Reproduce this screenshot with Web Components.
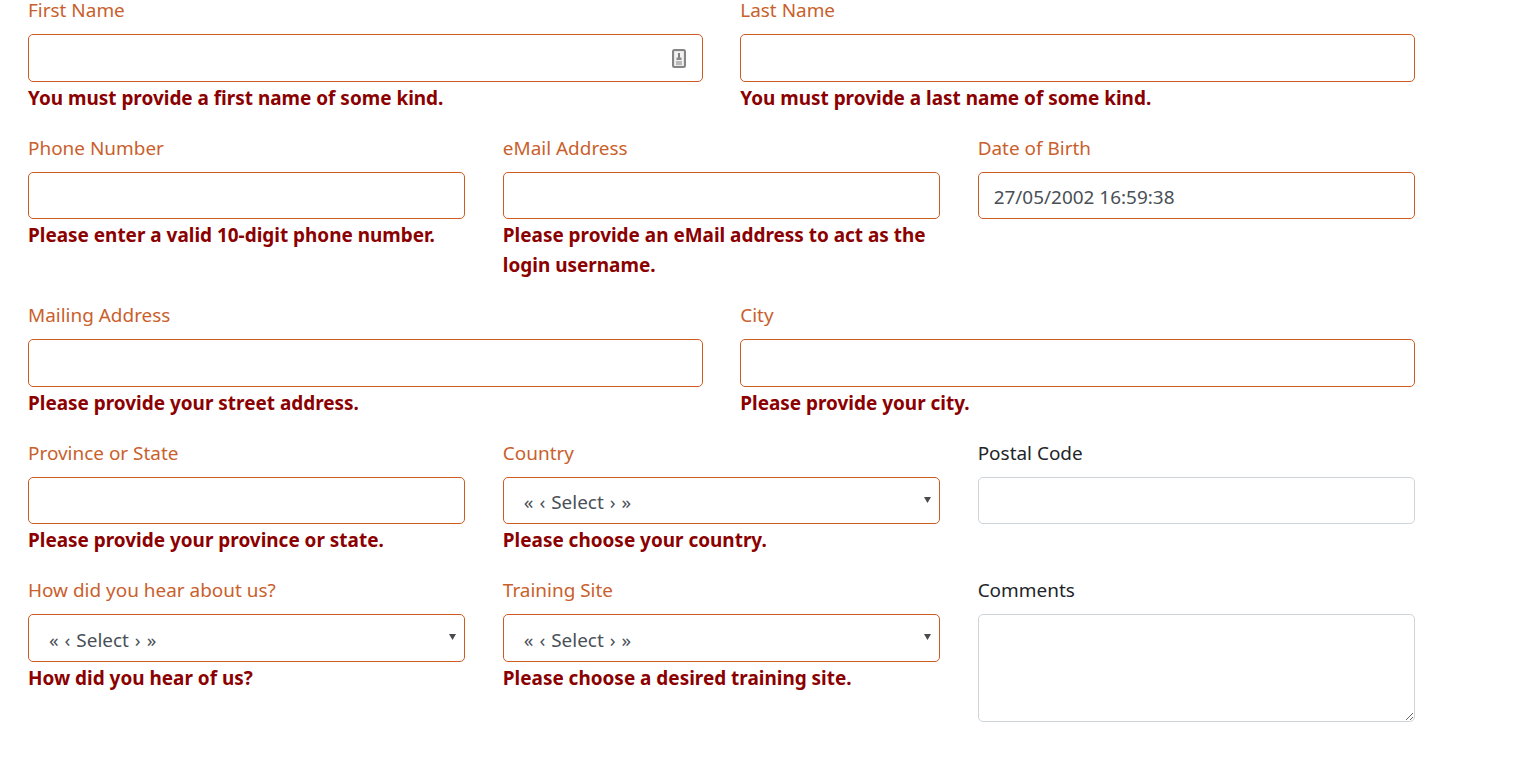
<!DOCTYPE html>
<html lang="en"><head><meta charset="utf-8"><title>Form</title>
<style>
html,body{margin:0;padding:0;background:#fff}
body{font:20px/30px "Noto Sans","Open Sans",sans-serif;color:#212529;overflow:hidden;height:771px}
</style></head><body>
<signup-form></signup-form>
<script>
const FONT='"Noto Sans","Open Sans","Liberation Sans",sans-serif';
class FormRow extends HTMLElement{
  constructor(){super();this.attachShadow({mode:'open'}).innerHTML=`<style>
  :host{display:grid;grid-template-columns:repeat(12,1fr);column-gap:37.5px}
  ::slotted([span="6"]){grid-column:span 6}
  ::slotted([span="4"]){grid-column:span 4}
  </style><slot></slot>`;}
}
customElements.define('form-row',FormRow);
class FormField extends HTMLElement{
  constructor(){super();
    const type=this.getAttribute('type')||'text';
    const label=this.getAttribute('label')||'';
    const err=this.getAttribute('error');
    const val=this.getAttribute('value')||'';
    const invalid=err!==null||this.hasAttribute('invalid');
    let ctl;
    if(type==='select') ctl=`<select><option>« ‹ Select › »</option></select><svg class="caret" width="7" height="6" viewBox="0 0 7 6"><path d="M0 0H7L3.5 6Z" fill="#4a4a4f"/></svg>`;
    else if(type==='area') ctl=`<textarea></textarea>`;
    else ctl=`<input type="text" value="${val}">`;
    if(this.hasAttribute('icon')) ctl+=`<svg class="ico" width="14" height="19" viewBox="0 0 14 19"><rect x="1" y="1" width="12" height="17" rx="1.5" fill="#e6e6e6" stroke="#858585" stroke-width="2"/><rect x="3" y="3" width="8" height="13" fill="#f2f2f2"/><path d="M7 4v5" stroke="#808080" stroke-width="2"/><path d="M4.5 8.5h5v2.5h-5z" fill="#8a8a8a"/><path d="M4 13h6M4 15h6" stroke="#a8a8a8" stroke-width="1.3"/></svg>`;
    this.attachShadow({mode:'open'}).innerHTML=`<style>
    :host{display:block;font-family:${FONT};font-size:18.95px;line-height:30px;margin-bottom:19px;min-width:0}
    label{display:block;padding-top:1px;margin-bottom:9px;color:${invalid?'#c9602c':'#212529'}}
    .wrap{position:relative;display:block}
    input,select,textarea{display:block;box-sizing:border-box;width:100%;height:47.5px;margin:0;border:1px solid ${invalid?'#cc5c22':'#ced4da'};border-radius:5px;background:#fff;color:#495057;font:inherit;padding:3px 15px 0;outline:0}
    select{appearance:none;-webkit-appearance:none;padding:4px 15px 0 20px;word-spacing:1px}
    textarea{height:108px;resize:vertical}
    .caret{position:absolute;right:9px;top:20px}
    .ico{position:absolute;right:17px;top:15px}
    .err{color:#8b0000;font-weight:700;margin-top:1px}
    </style><label>${label}</label><span class="wrap">${ctl}</span>${err!==null?`<div class="err">${err}</div>`:''}`;
  }
}
customElements.define('form-field',FormField);
class SignupForm extends HTMLElement{
  constructor(){super();this.attachShadow({mode:'open'}).innerHTML=`<style>
  :host{display:block;width:1387px;padding-left:28px;margin-top:-6px}
  </style>
  <form-row>
   <form-field span="6" label="First Name" icon error="You must provide a first name of some kind."></form-field>
   <form-field span="6" label="Last Name" error="You must provide a last name of some kind."></form-field>
  </form-row>
  <form-row>
   <form-field span="4" label="Phone Number" error="Please enter a valid 10-digit phone number."></form-field>
   <form-field span="4" label="eMail Address" error="Please provide an eMail address to act as the login username."></form-field>
   <form-field span="4" label="Date of Birth" invalid value="27/05/2002 16:59:38"></form-field>
  </form-row>
  <form-row>
   <form-field span="6" label="Mailing Address" error="Please provide your street address."></form-field>
   <form-field span="6" label="City" error="Please provide your city."></form-field>
  </form-row>
  <form-row>
   <form-field span="4" label="Province or State" error="Please provide your province or state."></form-field>
   <form-field span="4" label="Country" type="select" error="Please choose your country."></form-field>
   <form-field span="4" label="Postal Code"></form-field>
  </form-row>
  <form-row>
   <form-field span="4" label="How did you hear about us?" type="select" error="How did you hear of us?"></form-field>
   <form-field span="4" label="Training Site" type="select" error="Please choose a desired training site."></form-field>
   <form-field span="4" label="Comments" type="area"></form-field>
  </form-row>`;}
}
customElements.define('signup-form',SignupForm);
</script>
</body></html>
